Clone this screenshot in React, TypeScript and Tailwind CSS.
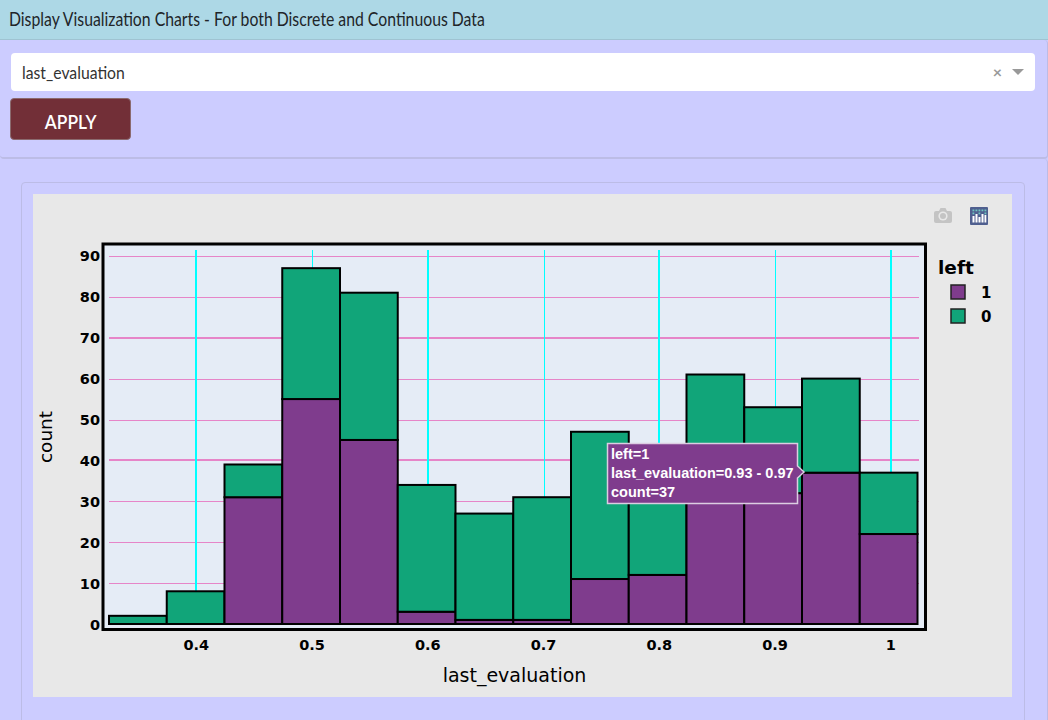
import React from "react";

const x = (v: number) => 312 + (v - 0.5) * 1157.5;
const y = (v: number) => 624 - v * 4.09;
// lineas finas en pixel entero para que no se vean grises
const snap = (n: number) => Math.round(n) + 0.5;

// total, then count with left=1
const bins: [number, number, number][] = [
  [0.35, 2, 0],
  [0.4, 8, 0],
  [0.45, 39, 31],
  [0.5, 87, 55],
  [0.55, 81, 45],
  [0.6, 34, 3],
  [0.65, 27, 1],
  [0.7, 31, 1],
  [0.75, 47, 11],
  [0.8, 38, 12],
  [0.85, 61, 36],
  [0.9, 53, 32],
  [0.95, 60, 37],
  [1, 37, 22],
];

const hLines: [number, number][] = [
  [10, 1], [20, 1], [30, 1], [40, 2], [50, 1], [60, 1], [70, 2], [80, 1], [90, 1],
];
const vLines: [number, number][] = [
  [0.4, 2], [0.5, 1], [0.6, 2], [0.7, 1], [0.8, 2], [0.9, 1], [1, 2],
];

const tickFont = { fontFamily: "'DejaVu Sans', sans-serif" };

function Chart() {
  return (
    <svg viewBox="33 194 979 503" className="block h-[503px] w-[979px]" style={tickFont}>
      <rect x="33" y="194" width="979" height="503" fill="#e8e8e8" />

      {/* zona del grafico */}
      <rect x="103" y="244" width="822.5" height="385.5" fill="#e5ecf6" stroke="#000" strokeWidth="3" />
      {hLines.map(([v, w]) => (
        <line
          key={v}
          x1="109"
          x2="919"
          y1={w === 1 ? snap(y(v)) : Math.round(y(v))}
          y2={w === 1 ? snap(y(v)) : Math.round(y(v))}
          stroke="#e685c8"
          strokeWidth={w}
        />
      ))}
      {vLines.map(([v, w]) => (
        <line
          key={v}
          x1={w === 1 ? snap(x(v)) : Math.round(x(v))}
          x2={w === 1 ? snap(x(v)) : Math.round(x(v))}
          y1="250"
          y2="624"
          stroke="#00ffff"
          strokeWidth={w}
        />
      ))}

      {bins.map(([, total, left], i) => {
        const x0 = 109 + i * 57.75;
        const w = 57.75;
        return (
          <g key={i} stroke="#000" strokeWidth="2">
            {left > 0 && <rect x={x0} y={y(left)} width={w} height={left * 4.09} fill="#7f3c8d" />}
            <rect x={x0} y={y(total)} width={w} height={(total - left) * 4.09} fill="#11a579" />
          </g>
        );
      })}

      {/* ticks */}
      {[0, 10, 20, 30, 40, 50, 60, 70, 80, 90].map((v) => (
        <text key={v} x="100" y={y(v) + 5.5} textAnchor="end" fontSize="14.5" fontWeight="700" fill="#000">
          {v}
        </text>
      ))}
      {[0.4, 0.5, 0.6, 0.7, 0.8, 0.9, 1].map((v) => (
        <text key={v} x={x(v)} y="650" textAnchor="middle" fontSize="14.5" fontWeight="700" fill="#000">
          {v}
        </text>
      ))}

      <text x="514.5" y="682" textAnchor="middle" fontSize="19" fill="#000">
        last_evaluation
      </text>
      <text
        x="0"
        y="0"
        textAnchor="middle"
        fontSize="18.5"
        fill="#000"
        transform="translate(52 437) rotate(-90)"
      >
        count
      </text>

      {/* leyenda */}
      <text x="938" y="274" fontSize="18.5" fontWeight="700" fill="#000">
        left
      </text>
      <rect x="951" y="285" width="14" height="14" fill="#7f3c8d" stroke="#222" strokeWidth="1.5" />
      <rect x="951" y="309" width="14" height="14" fill="#11a579" stroke="#222" strokeWidth="1.5" />
      <text x="981" y="298" fontSize="15" fontWeight="700" fill="#000">
        1
      </text>
      <text x="981" y="322" fontSize="15" fontWeight="700" fill="#000">
        0
      </text>

      {/* tooltip */}
      <path
        d="M607.5 443.5H797.5V466L804 472L797.5 478V503.5H607.5Z"
        fill="#7f3c8d"
        stroke="#dccde2"
        strokeWidth="1.5"
      />
      <g fontSize="14.5" fontWeight="700" fill="#fff" style={{ fontFamily: "'Liberation Sans', sans-serif" }}>
        <text x="611" y="459">left=1</text>
        <text x="611" y="478">last_evaluation=0.93 - 0.97</text>
        <text x="611" y="497">count=37</text>
      </g>

      {/* camara */}
      <path
        d="M934 213a2 2 0 0 1 2-2h3l1.5-3h5l1.5 3h3a2 2 0 0 1 2 2v8a2 2 0 0 1-2 2h-14a2 2 0 0 1-2-2Z"
        fill="#c4c4c4"
      />
      <circle cx="943" cy="216" r="4.6" fill="#e8e8e8" />
      <circle cx="943" cy="216" r="3" fill="#c4c4c4" />

      {/* logo de la barra */}
      <rect x="970" y="207" width="18" height="18" rx="1" fill="#4f5f8f" />
      <g fill="#fff">
        <rect x="972.5" y="216" width="2" height="6.5" />
        <rect x="975.5" y="214" width="2" height="8.5" />
        <rect x="978.5" y="217" width="2" height="5.5" />
        <rect x="981.5" y="214" width="2" height="8.5" />
        <rect x="984.5" y="215" width="1.8" height="7.5" />
      </g>
      <g fill="#6ec6c0">
        {[972.5, 975.5, 978.5, 981.5, 984.5].map((px) => (
          <rect key={px} x={px} y="209.5" width="1.8" height="1.8" />
        ))}
        {[972.5, 978.5, 984.5].map((px) => (
          <rect key={px} x={px} y="212.5" width="1.8" height="1.8" />
        ))}
      </g>
    </svg>
  );
}

export default function App() {
  return (
    <div className="h-[720px] w-[1048px] overflow-hidden bg-[#ccccff] font-['Lato','Liberation_Sans',sans-serif]">
      <div className="flex h-10 items-center border-b border-[#9fc3d2] bg-[#add8e6] pl-[9px] text-[19px] text-[#212529]">
        <span className="origin-left scale-x-[0.83] whitespace-nowrap">
          Display Visualization Charts - For both Discrete and Continuous Data
        </span>
      </div>

      <div className="h-[119px] rounded-[4px] border-b-2 border-r border-[#bcbce6] pl-[11px] pr-3 pt-[13px]">
        <div className="flex h-[38px] items-center rounded-[4px] bg-white pl-[11px] pr-[11px] text-[18px] text-[#333]">
          <span className="flex-1">
            <span className="inline-block origin-left scale-x-[0.875]">last_evaluation</span>
          </span>
          <span className="mr-[10px] text-[16px] leading-none font-bold text-[#999]">×</span>
          <span className="h-0 w-0 border-x-[6px] border-t-[6px] border-x-transparent border-t-[#999]" />
        </div>
        <button className="mt-[7px] -ml-px block h-[42px] w-[121px] rounded-[4px] border border-[#8b6a6e] bg-[#722f37] pt-[3px] text-[20px] font-semibold text-white">
          <span className="inline-block scale-x-[0.87]">APPLY</span>
        </button>
      </div>

      <div className="rounded-[4px] border-r border-[#bcbce6] pl-[21px] pt-[23px]">
        <div className="w-[1004px] rounded-[4px] border border-[#bcbce6] p-[11px] pb-[30px]">
          <Chart />
        </div>
      </div>
    </div>
  );
}
